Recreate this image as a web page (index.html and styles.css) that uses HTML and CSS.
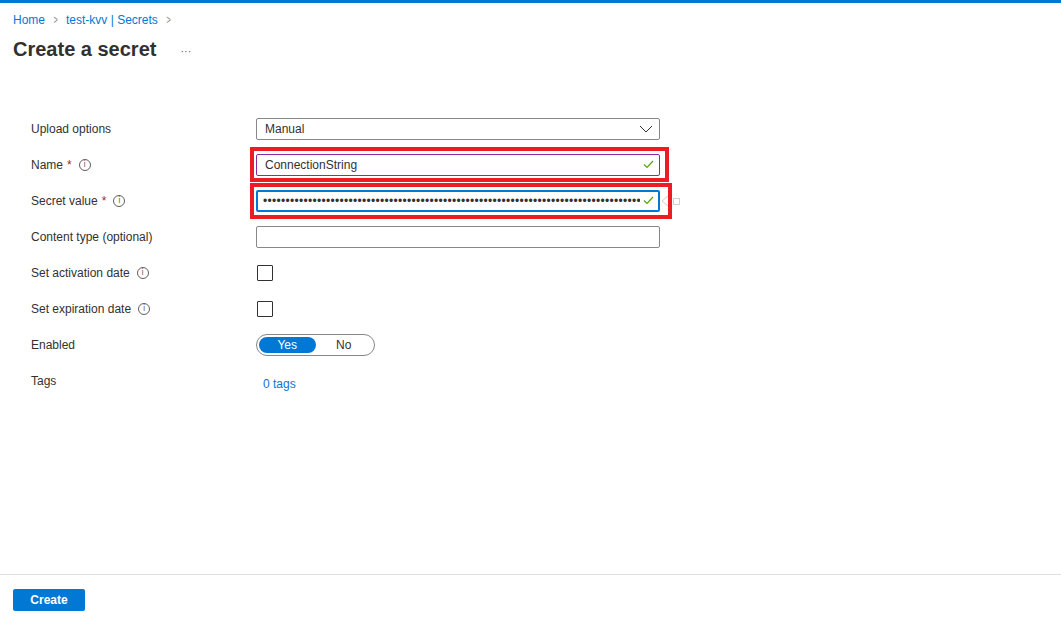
FILE: index.html
```html
<!DOCTYPE html>
<html lang="en">
<head>
  <meta charset="UTF-8" />
  <meta name="viewport" content="width=device-width, initial-scale=1.0"/>
  <title>Create a secret</title>
  <link rel="stylesheet" href="styles.css">
</head>
<body>
  <div class="topbar"></div>
  <main class="page">
    <nav class="breadcrumb">
      <a href="#">Home</a>
      <span class="chev">&gt;</span>
      <a href="#">test-kvv | Secrets</a>
      <span class="chev">&gt;</span>
    </nav>
    <div class="title-row">
      <h1>Create a secret</h1>
      <span class="more">···</span>
    </div>

    <div class="form">
      <div class="row">
        <label>Upload options</label>
        <div class="field">
          <div class="select">
            <span>Manual</span>
            <svg class="caret" width="14" height="8" viewBox="0 0 14 8"><path d="M1 1 L7 7 L13 1" fill="none" stroke="#323130" stroke-width="1"/></svg>
          </div>
        </div>
      </div>

      <div class="row">
        <label>Name <span class="req">*</span> <span class="info">i</span></label>
        <div class="field">
          <div class="input-wrap">
            <input class="input input-purple" type="text" value="ConnectionString">
            <svg class="check" width="11" height="9" viewBox="0 0 11 9"><path d="M1 4.5 L4 7.5 L10 1" fill="none" stroke="#57a300" stroke-width="1.2"/></svg>
            <div class="highlight hl-1"></div>
          </div>
        </div>
      </div>

      <div class="row">
        <label>Secret value <span class="req">*</span> <span class="info">i</span></label>
        <div class="field">
          <div class="input-wrap">
            <input class="input input-focus" type="password" value="xxxxxxxxxxxxxxxxxxxxxxxxxxxxxxxxxxxxxxxxxxxxxxxxxxxxxxxxxxxxxxxxxxxxxxxxxxxxxxxxxxxxxxxxxxxxxxxxxxxxxxx">
            <svg class="check" width="11" height="9" viewBox="0 0 11 9"><path d="M1 4.5 L4 7.5 L10 1" fill="none" stroke="#57a300" stroke-width="1.2"/></svg>
            <svg class="pw-icon" width="20" height="12" viewBox="0 0 20 12"><path d="M7 1 L1 6 L7 11" fill="none" stroke="#d2d0ce" stroke-width="1"/><rect x="12.5" y="3.5" width="6" height="6" fill="#fff" stroke="#d2d0ce"/></svg>
            <div class="highlight hl-2"></div>
          </div>
        </div>
      </div>

      <div class="row">
        <label>Content type (optional)</label>
        <div class="field">
          <input class="input" type="text" value="">
        </div>
      </div>

      <div class="row">
        <label>Set activation date <span class="info">i</span></label>
        <div class="field"><span class="checkbox"></span></div>
      </div>

      <div class="row">
        <label>Set expiration date <span class="info">i</span></label>
        <div class="field"><span class="checkbox"></span></div>
      </div>

      <div class="row">
        <label>Enabled</label>
        <div class="field">
          <div class="toggle">
            <span class="opt active">Yes</span>
            <span class="opt">No</span>
          </div>
        </div>
      </div>

      <div class="row">
        <label>Tags</label>
        <div class="field tags"><a href="#">0 tags</a></div>
      </div>
    </div>
  </main>

  <footer class="footer">
    <button class="btn-primary">Create</button>
  </footer>
</body>
</html>
```

FILE: styles.css
```css
* {
  box-sizing: border-box;
}

html, body {
  margin: 0;
  height: 100%;
}

body {
  font-family: 'Segoe UI', 'Liberation Sans', Arial, sans-serif;
  font-size: 12px;
  color: #323130;
  background: #ffffff;
  display: flex;
  flex-direction: column;
}

.topbar {
  height: 3px;
  background: #0078d4;
}

.page {
  flex: 1;
  padding: 9px 13px 0;
}

.breadcrumb {
  display: flex;
  align-items: center;
  height: 16px;
  line-height: 16px;
}

.breadcrumb a {
  color: #0078d4;
  text-decoration: none;
}

.breadcrumb .chev {
  color: #8a8886;
  margin: 0 7px;
  transform: scaleX(0.6);
}

.title-row {
  display: flex;
  align-items: center;
  margin-top: 7px;
  height: 28px;
}

h1 {
  margin: 0;
  font-size: 20px;
  font-weight: 700;
  line-height: 28px;
  color: #323130;
}

.more {
  margin-left: 24px;
  font-size: 11px;
  color: #605e5c;
  padding-top: 4px;
}

.form {
  margin-top: 48px;
  padding-left: 18px;
}

.row {
  display: flex;
  align-items: center;
  height: 36px;
}

.row label {
  width: 225px;
  display: flex;
  align-items: center;
}

.req {
  color: #a4262c;
  margin-left: 4px;
}

.info {
  display: inline-flex;
  align-items: center;
  justify-content: center;
  width: 12px;
  height: 12px;
  border: 1px solid #605e5c;
  border-radius: 50%;
  font-size: 8px;
  line-height: 1;
  color: #605e5c;
  margin-left: 7px;
  font-family: 'DejaVu Sans', sans-serif;
}

.field {
  width: 404px;
}

.select {
  height: 22px;
  border: 1px solid #8a8886;
  border-radius: 2px;
  display: flex;
  align-items: center;
  justify-content: space-between;
  padding: 0 6px 0 8px;
}

.input-wrap {
  position: relative;
}

.input {
  display: block;
  width: 100%;
  height: 22px;
  border: 1px solid #8a8886;
  border-radius: 2px;
  padding: 0 18px 0 8px;
  font-family: inherit;
  font-size: 12px;
  color: #323130;
  outline: none;
}

.input-purple {
  border-color: #8a2da5;
}

.input-focus {
  border: 2px solid #0078d4;
  padding-left: 5px;
  letter-spacing: 0.3px;
}

.check {
  position: absolute;
  right: 6px;
  top: 6px;
}

.pw-icon {
  position: absolute;
  right: -21px;
  top: 5px;
}

.highlight {
  position: absolute;
  border: 4px solid #ed1c24;
  pointer-events: none;
}

.hl-1 {
  left: -6px;
  right: -9px;
  top: -7px;
  bottom: -6px;
}

.hl-2 {
  left: -6px;
  right: -12px;
  top: -7px;
  bottom: -7px;
}

.checkbox {
  display: block;
  width: 16px;
  height: 16px;
  border: 1px solid #323130;
  border-radius: 1px;
  margin-left: 1px;
}

.toggle {
  display: inline-flex;
  width: 119px;
  height: 22px;
  border: 1px solid #8a8886;
  border-radius: 11px;
  padding: 2px;
}

.toggle .opt {
  flex: 1;
  display: flex;
  align-items: center;
  justify-content: center;
  border-radius: 8px;
  color: #323130;
}

.toggle .opt.active {
  background: #0078d4;
  color: #ffffff;
}

.tags {
  padding-top: 6px;
  padding-left: 7px;
}

.tags a {
  color: #0078d4;
  text-decoration: none;
}

.footer {
  border-top: 1px solid #e1dfdd;
  padding: 14px 13px 7px;
}

.btn-primary {
  display: block;
  width: 72px;
  height: 22px;
  border: none;
  border-radius: 2px;
  background: #0078d4;
  color: #ffffff;
  font-family: inherit;
  font-size: 12px;
  font-weight: 700;
  cursor: pointer;
}
```
